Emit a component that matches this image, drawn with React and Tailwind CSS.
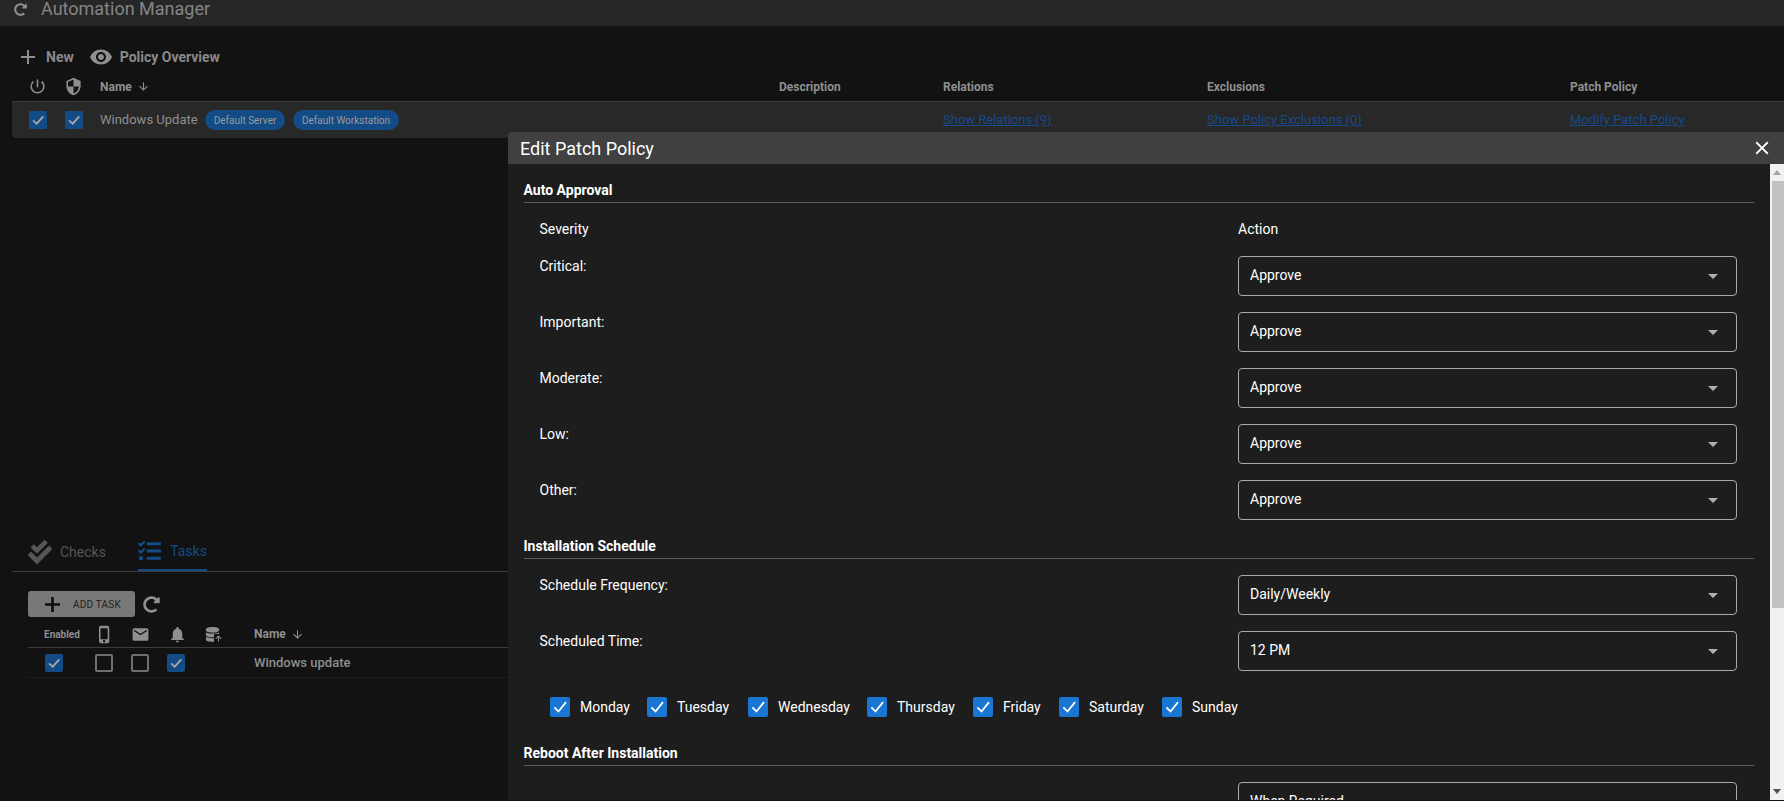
import React from "react";
import {
  MdAdd, MdVisibility, MdPowerSettingsNew, MdClose, MdArrowDropDown,
  MdArrowDownward, MdEmail, MdNotifications, MdOutlinePhoneIphone, MdSecurity,
} from "react-icons/md";
import { FaCheckDouble, FaTasks, FaDatabase, FaArrowUp, FaRedoAlt } from "react-icons/fa";

function DimCheck({ checked = true }) {
  if (!checked) return <span className="block w-[18px] h-[18px] rounded-[2px] border-2 border-[#6f6f6f]" />;
  return (
    <span className="flex items-center justify-center w-[18px] h-[18px] rounded-[2px] bg-[#124b85]">
      <svg viewBox="0 0 24 24" className="w-[16px] h-[16px]" fill="none" stroke="#a8a8a8" strokeWidth="2.6">
        <path d="M4.5 12.5 L10 17.5 L20 6.5" />
      </svg>
    </span>
  );
}

function Chip({ children, w }) {
  return <span className={`flex items-center justify-center h-5 rounded-full bg-[#124b85] text-[10px] text-[#9a9a9a] ${w}`}>{children}</span>;
}

function Select({ value }) {
  return (
    <div className="flex items-center justify-between h-10 w-[499px] shrink-0 rounded-[4px] border border-[#a9a9a9] pl-[11px] pr-[11px] text-[14px] text-white">
      <span className="-mt-[2px]">{value}</span>
      <MdArrowDropDown className="text-[24px] text-[#b0b0b0]" />
    </div>
  );
}

function Heading({ children }) {
  return (
    <div className="h-[23px] border-b border-[#5e5e5e] w-[1230px] text-[14px] font-bold leading-5 text-white">
      <span className="block -ml-[0.5px]">{children}</span>
    </div>
  );
}

function Row({ label, value }) {
  return (
    <div className="flex justify-between w-[1197px] ml-4 mb-4">
      <span className="-ml-[0.5px] text-[14px] leading-5 text-white">{label}</span>
      <Select value={value} />
    </div>
  );
}

function Day({ label, className }) {
  return (
    <div className={`flex items-center ${className}`}>
      <span className="flex items-center justify-center w-5 h-5 rounded-[2px] bg-[#1976d2]">
        <svg viewBox="0 0 24 24" className="w-[18px] h-[18px]" fill="none" stroke="#ffffff" strokeWidth="2.4">
          <path d="M4.5 12.5 L10 18 L20 5.5" />
        </svg>
      </span>
      <span className="ml-[10px] text-[14px] text-white">{label}</span>
    </div>
  );
}

const days = [
  ["Monday", "w-[97px]"], ["Tuesday", "w-[101px]"], ["Wednesday", "w-[119px]"], ["Thursday", "w-[106px]"],
  ["Friday", "w-[86px]"], ["Saturday", "w-[103px]"], ["Sunday", ""],
];

export default function App() {
  return (
    <div className="relative h-[801px] w-[1784px] overflow-hidden bg-[#121212] font-['Roboto',sans-serif] text-[#8f8f8f]">
      {/* page header */}
      <div className="flex items-center h-[26px] bg-[#262626] pl-[14px] pb-[8px]">
        <FaRedoAlt className="text-[13px] text-[#8f8f8f]" />
        <span className="ml-[14px] text-[18px] leading-[18px] text-[#858585]">Automation Manager</span>
      </div>

      {/* toolbar */}
      <div className="flex items-center h-[24px] mt-[19px] pl-[16px] text-[14px] font-bold text-[#8a8a8a]">
        <MdAdd className="text-[24px] text-[#8f8f8f]" />
        <span className="ml-[6px]">New</span>
        <MdVisibility className="ml-[15px] text-[24px] text-[#8f8f8f]" />
        <span className="ml-[7px]">Policy Overview</span>
      </div>

      {/* policies table */}
      <div className="ml-3 mt-[3px] flex items-center h-[30px] pl-[16px] border-b border-[#3c3c3c] text-[12px] font-bold text-[#8f8f8f]">
        <span className="w-[36px] flex"><MdPowerSettingsNew className="text-[19px]" /></span>
        <span className="w-[36px] flex"><MdSecurity className="text-[19px]" /></span>
        <span className="w-[679px] flex items-center">Name<MdArrowDownward className="ml-[5px] text-[13px] font-normal" /></span>
        <span className="w-[164px]">Description</span>
        <span className="w-[264px]">Relations</span>
        <span className="w-[363px]">Exclusions</span>
        <span>Patch Policy</span>
      </div>
      <div className="ml-3 flex items-center h-[36px] pl-[17px] rounded-bl-[4px] bg-[#282828] text-[13px]">
        <span className="w-[36px]"><DimCheck /></span>
        <span className="w-[35px]"><DimCheck /></span>
        <span className="w-[105px] text-[#8f8f8f]">Windows Update</span>
        <Chip w="w-[80px]">Default Server</Chip>
        <Chip w="w-[106px] ml-2">Default Workstation</Chip>
        <span className="w-[380px]" />
        <span className="w-[164px]" />
        <a className="w-[264px] underline text-[#154a8c]">Show Relations (9)</a>
        <a className="w-[363px] underline text-[#154a8c]">Show Policy Exclusions (0)</a>
        <a className="underline text-[#154a8c]">Modify Patch Policy</a>
      </div>

      {/* tabs */}
      <div className="ml-3 mt-[400px] w-[496px] h-[34px] border-b border-[#3c3c3c] flex items-start pl-4">
        <div className="flex items-center h-[28px]">
          <FaCheckDouble className="text-[24px] text-[#565656]" />
          <span className="ml-2 text-[14px] text-[#555555]">Checks</span>
        </div>
        <div className="ml-8 flex items-center h-[33px] pb-[5px] border-b-2 border-[#124b85] w-[69px]">
          <FaTasks className="text-[24px] text-[#124b85]" />
          <span className="ml-[9px] text-[14px] text-[#124b85]">Tasks</span>
        </div>
      </div>

      {/* add task */}
      <div className="ml-7 mt-[19px] flex items-center">
        <div className="flex items-center w-[107px] h-[26px] rounded-[3px] bg-[#787878] pl-[17px]">
          <svg viewBox="0 0 15 15" className="w-[15px] h-[15px]" fill="#0c0c0c">
            <path d="M6.2 0h2.6v6.2H15v2.6H8.8V15H6.2V8.8H0V6.2h6.2z" />
          </svg>
          <span className="ml-[13px] text-[10px] tracking-[0.2px] text-[#222222]">ADD TASK</span>
        </div>
        <FaRedoAlt className="ml-[8px] text-[17px] text-[#8f8f8f]" />
      </div>

      {/* tasks table */}
      <div className="ml-7 mt-[4px] w-[480px] flex items-center h-[27px] border-b border-[#3c3c3c] text-[#8f8f8f]">
        <span className="ml-4 w-[52px] text-[10px] font-bold">Enabled</span>
        <span className="w-[36px] flex"><MdOutlinePhoneIphone className="text-[19px] -ml-[1px]" /></span>
        <span className="w-[37px] flex"><MdEmail className="text-[19px] -ml-[1px]" /></span>
        <span className="w-[36px] flex"><MdNotifications className="text-[19px] -ml-[1px]" /></span>
        <span className="relative w-[49px] flex">
          <FaDatabase className="text-[15px]" />
          <span className="absolute left-[9px] top-[7px] flex items-center justify-center w-[9px] h-[9px] bg-[#121212]">
            <FaArrowUp className="text-[7px]" />
          </span>
        </span>
        <span className="flex items-center text-[12px] font-bold">Name<MdArrowDownward className="ml-[5px] text-[13px]" /></span>
      </div>
      <div className="ml-7 w-[480px] flex items-center h-[30px] border-b border-[#1d1d1d]">
        <span className="ml-[17px] w-[50px]"><DimCheck /></span>
        <span className="w-[36px]"><DimCheck checked={false} /></span>
        <span className="w-[36px]"><DimCheck checked={false} /></span>
        <span className="w-[87px]"><DimCheck /></span>
        <span className="text-[13px] font-medium text-[#8f8f8f]">Windows update</span>
      </div>

      {/* dialog */}
      <div className="absolute left-[508px] top-[132px] w-[1276px] h-[668px] flex flex-col overflow-hidden rounded-l-[4px] bg-[#1d1d1d]">
        <div className="flex items-center justify-between h-8 shrink-0 bg-[#404040] pl-3 pr-[11px] text-white">
          <span className="text-[18px]">Edit Patch Policy</span>
          <MdClose className="text-[22px]" />
        </div>
        <div className="flex flex-1 min-h-0">
          <div className="flex-1 min-w-0 overflow-hidden pl-4 pt-4">
            <Heading>Auto Approval</Heading>
            <div className="flex justify-between w-[1197px] ml-4 mt-4 mb-[17px] h-5 text-[14px] leading-5 text-white">
              <span className="-ml-[0.5px]">Severity</span>
              <span className="w-[499px]">Action</span>
            </div>
            <Row label="Critical:" value="Approve" />
            <Row label="Important:" value="Approve" />
            <Row label="Moderate:" value="Approve" />
            <Row label="Low:" value="Approve" />
            <Row label="Other:" value="Approve" />

            <Heading>Installation Schedule</Heading>
            <div className="h-4" />
            <Row label="Schedule Frequency:" value="Daily/Weekly" />
            <Row label="Scheduled Time:" value="12 PM" />
            <div className="flex h-5 ml-[26px] mt-[26px] mb-[26px]">
              {days.map(([l, w]) => <Day key={l} label={l} className={w} />)}
            </div>

            <Heading>Reboot After Installation</Heading>
            <div className="h-4" />
            <Row label="" value="When Required" />
          </div>
          <div className="flex flex-col w-[14px] shrink-0 bg-[#f1f1f1]">
            <div className="flex items-center justify-center h-[17px]">
              <span className="w-0 h-0 border-x-[4px] border-x-transparent border-b-[5px] border-b-[#a3a3a3]" />
            </div>
            <div className="ml-[2px] h-[427px] bg-[#c1c1c1]" />
            <div className="mt-auto flex items-center justify-center h-[17px]">
              <span className="w-0 h-0 border-x-[4px] border-x-transparent border-t-[5px] border-t-[#505050]" />
            </div>
          </div>
        </div>
      </div>
    </div>
  );
}
